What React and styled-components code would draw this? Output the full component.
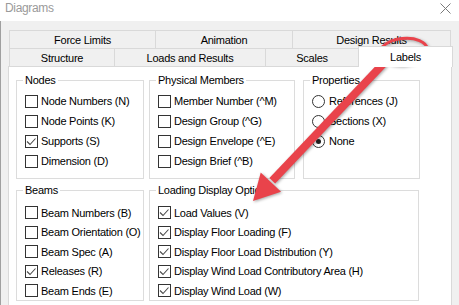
import React from "react";
import styled, { createGlobalStyle } from "styled-components";

const GlobalStyle = createGlobalStyle`
  html, body {
    margin: 0;
    padding: 0;
    background: #f0f0f0;
  }
  body {
    font-family: "Liberation Sans", Arial, sans-serif;
    font-size: 11px;
    color: #000;
  }
  * {
    box-sizing: border-box;
  }
`;

const Window = styled.div`
  position: relative;
  width: 459px;
  height: 305px;
  overflow: hidden;
  background: #f0f0f0;
`;

const TitleBar = styled.div`
  height: 21px;
  background: #fff;
  display: flex;
  justify-content: space-between;
  align-items: flex-start;
  padding: 1px 8px 0 5px;
`;

const Title = styled.span`
  font-size: 12px;
  line-height: 15px;
  letter-spacing: -0.35px;
  color: #9a9a9a;
`;

const CloseIcon = styled.svg`
  margin-top: 2px;
`;

const Body = styled.div`
  height: 284px;
  border-left: 1px solid #a0a0a0;
  padding: 9px 0 0 7px;
`;

const TabRow = styled.div`
  display: flex;
  height: 18px;
  margin-left: 1px;
`;

const Tab = styled.div`
  position: relative;
  width: ${(p) => p.$w}px;
  height: ${(p) => (p.$active ? 21 : 18)}px;
  margin-top: ${(p) => (p.$active ? -2 : 0)}px;
  z-index: ${(p) => (p.$active ? 1 : 0)};
  background: ${(p) => (p.$active ? "#fff" : "#f0f0f0")};
  border-top: 1px solid #d9d9d9;
  border-left: 1px solid #d9d9d9;
  display: flex;
  align-items: center;
  justify-content: center;
  letter-spacing: -0.25px;
  white-space: nowrap;
  &:last-child {
    border-right: 1px solid #d9d9d9;
  }
`;

const Panel = styled.div`
  width: 444px;
  height: 260px;
  background: #fff;
  border: 1px solid #d9d9d9;
  padding: 6px 0 0 7px;
  display: flex;
  flex-direction: column;
  gap: 4px;
`;

const GroupRow = styled.div`
  display: flex;
  gap: 5px;
`;

const Group = styled.fieldset`
  margin: 0 0 0 ${(p) => p.$ml || 0}px;
  min-width: 0;
  width: ${(p) => p.$w}px;
  height: ${(p) => p.$h}px;
  border: 1px solid #dcdcdc;
  padding: ${(p) => p.$pt}px 0 0 8px;
`;

const Legend = styled.legend`
  padding: 0 2px;
  margin-left: -2px;
  line-height: 14px;
  letter-spacing: -0.25px;
  white-space: nowrap;
`;

const Option = styled.div`
  display: flex;
  align-items: center;
  height: ${(p) => p.$h}px;
  letter-spacing: -0.25px;
  white-space: nowrap;
`;

const CheckBox = styled.span`
  flex: none;
  width: 13px;
  height: 13px;
  margin-right: 3px;
  border: 1px solid #333;
  background: #fff;
  display: flex;
  align-items: center;
  justify-content: center;
`;

const RadioButton = styled.span`
  flex: none;
  width: 13px;
  height: 13px;
  margin-right: 4px;
  border: 1px solid #333;
  border-radius: 50%;
  background: #fff;
  display: flex;
  align-items: center;
  justify-content: center;
  &::after {
    content: "";
    display: ${(p) => (p.$on ? "block" : "none")};
    width: 5px;
    height: 5px;
    border-radius: 50%;
    background: #222;
  }
`;

const Overlay = styled.svg`
  position: absolute;
  top: 0;
  left: 0;
  pointer-events: none;
  filter: drop-shadow(1px 1px 1.5px rgba(0, 0, 0, 0.35));
`;

const Tick = () => (
  <svg width="11" height="11" viewBox="0 0 11 11">
    <path d="M1 5.5 L4 8.5 L9.5 2.5" fill="none" stroke="#4a4a4a" strokeWidth="1.1" />
  </svg>
);

const Check = ({ label, on, h }) => (
  <Option $h={h}>
    <CheckBox>{on && <Tick />}</CheckBox>
    {label}
  </Option>
);

const Radio = ({ label, on }) => (
  <Option $h={20}>
    <RadioButton $on={on} />
    {label}
  </Option>
);

const nodes = [
  ["Node Numbers (N)", false],
  ["Node Points (K)", false],
  ["Supports (S)", true],
  ["Dimension (D)", false],
];

const members = [
  ["Member Number (^M)", false],
  ["Design Group (^G)", false],
  ["Design Envelope (^E)", false],
  ["Design Brief (^B)", false],
];

const beams = [
  ["Beam Numbers (B)", false],
  ["Beam Orientation (O)", false],
  ["Beam Spec (A)", false],
  ["Releases (R)", true],
  ["Beam Ends (E)", false],
];

const loading = [
  ["Load Values (V)", true],
  ["Display Floor Loading (F)", true],
  ["Display Floor Load Distribution (Y)", true],
  ["Display Wind Load Contributory Area (H)", true],
  ["Display Wind Load (W)", true],
];

// arrow geometry, tip at bottom left of the shaft
const tip = [253, 201];
const start = [384, 63];
const len = Math.hypot(tip[0] - start[0], tip[1] - start[1]);
const d = [(tip[0] - start[0]) / len, (tip[1] - start[1]) / len];
const n = [-d[1], d[0]];
const base = [tip[0] - 26 * d[0], tip[1] - 26 * d[1]];
const head = [
  tip,
  [base[0] + 14 * n[0], base[1] + 14 * n[1]],
  [base[0] - 14 * n[0], base[1] - 14 * n[1]],
]
  .map((p) => p.join(","))
  .join(" ");

const App = () => {
  return (
    <Window>
      <GlobalStyle />
      <TitleBar>
        <Title>Diagrams</Title>
        <CloseIcon width="11" height="11" viewBox="0 0 11 11">
          <path d="M0.5 0.5 L10.5 10.5 M10.5 0.5 L0.5 10.5" stroke="#7a7a7a" strokeWidth="1" />
        </CloseIcon>
      </TitleBar>
      <Body>
        <TabRow>
          <Tab $w={146}>Force Limits</Tab>
          <Tab $w={137}>Animation</Tab>
          <Tab $w={159}>Design Results</Tab>
        </TabRow>
        <TabRow>
          <Tab $w={105}>Structure</Tab>
          <Tab $w={151}>Loads and Results</Tab>
          <Tab $w={93}>Scales</Tab>
          <Tab $w={95} $active>Labels</Tab>
        </TabRow>
        <Panel>
          <GroupRow>
            <Group $w={128} $h={106} $pt={4}>
              <Legend>Nodes</Legend>
              {nodes.map(([l, on]) => (
                <Check key={l} label={l} on={on} h={20} />
              ))}
            </Group>
            <Group $w={146} $h={106} $pt={4}>
              <Legend>Physical Members</Legend>
              {members.map(([l, on]) => (
                <Check key={l} label={l} on={on} h={20} />
              ))}
            </Group>
            <Group $w={117} $h={106} $pt={4} $ml={3}>
              <Legend>Properties</Legend>
              <Radio label="References (J)" />
              <Radio label="Sections (X)" />
              <Radio label="None" on />
            </Group>
          </GroupRow>
          <GroupRow>
            <Group $w={128} $h={118} $pt={6}>
              <Legend>Beams</Legend>
              {beams.map(([l, on]) => (
                <Check key={l} label={l} on={on} h={19.5} />
              ))}
            </Group>
            <Group $w={270} $h={118} $pt={6}>
              <Legend>Loading Display Options</Legend>
              {loading.map(([l, on]) => (
                <Check key={l} label={l} on={on} h={19.5} />
              ))}
            </Group>
          </GroupRow>
        </Panel>
      </Body>
      <Overlay width="459" height="305" viewBox="0 0 459 305">
        <ellipse
          cx="403.5"
          cy="51.5"
          rx="24"
          ry="13"
          transform="rotate(-6 403.5 51.5)"
          fill="none"
          stroke="#e9434b"
          strokeWidth="3"
        />
        <line
          x1={start[0]}
          y1={start[1]}
          x2={base[0] - 2 * d[0]}
          y2={base[1] - 2 * d[1]}
          stroke="#e9434b"
          strokeWidth="8"
        />
        <polygon points={head} fill="#e9434b" />
      </Overlay>
    </Window>
  );
};

export default App;
